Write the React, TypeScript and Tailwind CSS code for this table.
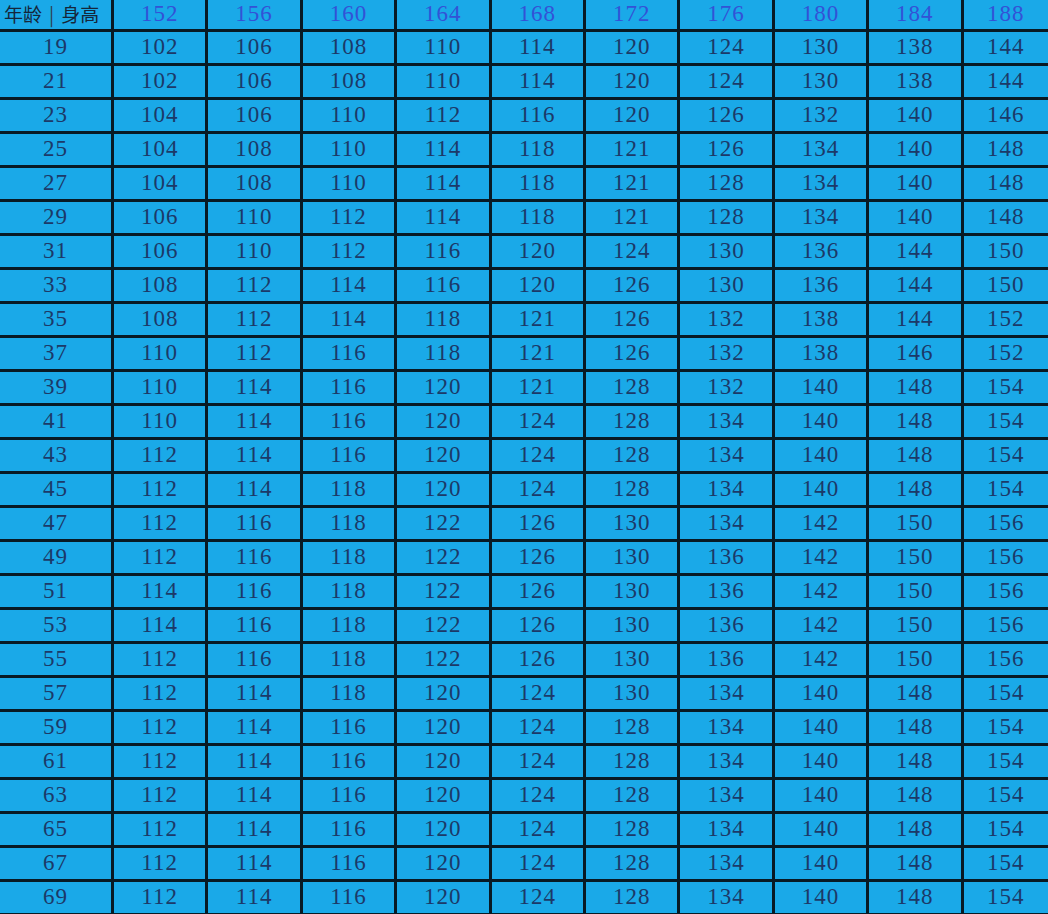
const heights = [152, 156, 160, 164, 168, 172, 176, 180, 184, 188];

const rows: [number, number[]][] = [
  [19, [102, 106, 108, 110, 114, 120, 124, 130, 138, 144]],
  [21, [102, 106, 108, 110, 114, 120, 124, 130, 138, 144]],
  [23, [104, 106, 110, 112, 116, 120, 126, 132, 140, 146]],
  [25, [104, 108, 110, 114, 118, 121, 126, 134, 140, 148]],
  [27, [104, 108, 110, 114, 118, 121, 128, 134, 140, 148]],
  [29, [106, 110, 112, 114, 118, 121, 128, 134, 140, 148]],
  [31, [106, 110, 112, 116, 120, 124, 130, 136, 144, 150]],
  [33, [108, 112, 114, 116, 120, 126, 130, 136, 144, 150]],
  [35, [108, 112, 114, 118, 121, 126, 132, 138, 144, 152]],
  [37, [110, 112, 116, 118, 121, 126, 132, 138, 146, 152]],
  [39, [110, 114, 116, 120, 121, 128, 132, 140, 148, 154]],
  [41, [110, 114, 116, 120, 124, 128, 134, 140, 148, 154]],
  [43, [112, 114, 116, 120, 124, 128, 134, 140, 148, 154]],
  [45, [112, 114, 118, 120, 124, 128, 134, 140, 148, 154]],
  [47, [112, 116, 118, 122, 126, 130, 134, 142, 150, 156]],
  [49, [112, 116, 118, 122, 126, 130, 136, 142, 150, 156]],
  [51, [114, 116, 118, 122, 126, 130, 136, 142, 150, 156]],
  [53, [114, 116, 118, 122, 126, 130, 136, 142, 150, 156]],
  [55, [112, 116, 118, 122, 126, 130, 136, 142, 150, 156]],
  [57, [112, 114, 118, 120, 124, 130, 134, 140, 148, 154]],
  [59, [112, 114, 116, 120, 124, 128, 134, 140, 148, 154]],
  [61, [112, 114, 116, 120, 124, 128, 134, 140, 148, 154]],
  [63, [112, 114, 116, 120, 124, 128, 134, 140, 148, 154]],
  [65, [112, 114, 116, 120, 124, 128, 134, 140, 148, 154]],
  [67, [112, 114, 116, 120, 124, 128, 134, 140, 148, 154]],
  [69, [112, 114, 116, 120, 124, 128, 134, 140, 148, 154]],
];

const cell = "bg-[#1aa9e8] flex items-center justify-center";

export default function App() {
  return (
    <div className="w-[1048px] h-[914px] overflow-hidden bg-[#081a24]">
      <div className="grid grid-cols-[111px_repeat(9,91.4px)_1fr] grid-rows-[29px_repeat(26,31px)] gap-[3px] font-['Liberation_Serif',serif] text-[23px] tracking-[1px] text-[#1c3968]">
        <div className="bg-[#1aa9e8] flex items-center pl-[4px] font-['Noto_Sans_CJK_SC',sans-serif] text-[19px] tracking-normal text-[#15263a]">
          年龄<span className="mx-[7px] text-[#2e4050]">|</span>身高
        </div>
        {heights.map((h) => (
          <div key={h} className={`${cell} text-[#3352d6]`}>
            {h}
          </div>
        ))}
        {rows.map(([age, vals]) => (
          <>
            <div key={`a${age}`} className={cell}>
              {age}
            </div>
            {vals.map((v, i) => (
              <div key={`${age}-${i}`} className={cell}>
                {v}
              </div>
            ))}
          </>
        ))}
      </div>
    </div>
  );
}
